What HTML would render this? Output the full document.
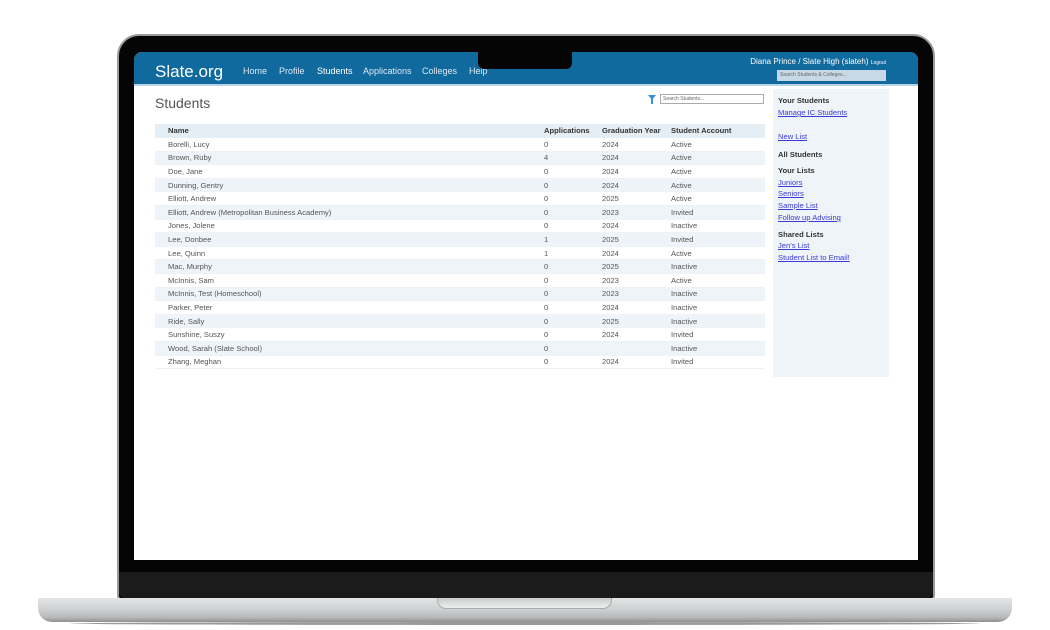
<!DOCTYPE html>
<html><head><style>
*{margin:0;padding:0;box-sizing:border-box}
body{width:1050px;height:630px;background:#fff;position:relative;overflow:hidden;font-family:"Liberation Sans",Arial,sans-serif}
.lid{position:absolute;left:117px;top:34px;width:818px;height:566px;background:#050505;border-radius:22px 22px 4px 4px;border:2px solid #9a9a9a}
.chin{position:absolute;left:119px;top:572px;width:814px;height:26px;background:#1b1b1b;border-radius:0 0 6px 6px}
.screen{position:absolute;left:134px;top:52px;width:784px;height:508px;background:#fff;border-radius:8px 8px 0 0;overflow:hidden}
.hdr{position:absolute;left:0;top:0;width:784px;height:34px;background:#116a9e;border-bottom:2px solid #b9d3e6}
.notch{position:absolute;left:478px;top:52px;width:94px;height:17px;background:#050505;border-radius:0 0 6px 6px}
.logo{position:absolute;left:21px;top:10px;color:#fff;font-size:17px}
.nav{position:absolute;top:14px;color:#dde9f3;font-size:9px}
.user{position:absolute;right:32px;top:5px;color:#fff;font-size:8px}
.user small{font-size:5px}
.gsearch{position:absolute;left:643px;top:18px;width:109px;height:11px;background:#c7d9e6;font-size:5px;color:#666;padding:2px 3px}
h1{position:absolute;left:21px;top:43px;font-size:14px;font-weight:normal;color:#555}
.filter{position:absolute;left:514px;top:43px;width:0;height:0;border-left:4px solid transparent;border-right:4px solid transparent;border-top:5px solid #3a8fd8}
.filter:after{content:"";position:absolute;left:-1px;top:-1px;width:2px;height:5px;background:#3a8fd8}
.ssearch{position:absolute;left:526px;top:42px;width:104px;height:10px;border:1px solid #aaa;font-size:5px;color:#666;padding:1px 2px}
table{position:absolute;left:21px;top:72px;width:610px;border-collapse:collapse;font-size:7.6px;color:#555}
td,th{height:13.6px;padding:0;text-align:left}
th{font-weight:bold;color:#333;background:#e5eef5}
tr:nth-child(odd) td{background:#eef4f9}
tr td{border-bottom:1px solid #eef2f5}
td:first-child,th:first-child{padding-left:13px;width:389px}
td:nth-child(2),th:nth-child(2){width:58px}
td:nth-child(3),th:nth-child(3){width:69px}
.side{position:absolute;left:639px;top:37px;width:116px;height:288px;background:#eef4f8;font-size:7.6px}
.side b,.side a{position:absolute;left:5px;white-space:nowrap}
.side b{color:#333}
.side a{color:#3b3bd6;text-decoration:underline}
.base{position:absolute;left:38px;top:598px;width:974px;height:24px;background:linear-gradient(#e4e5e6,#cfd1d2 45%,#b7b9ba 80%,#8f9091);border-radius:2px 2px 14px 14px}
.cut{position:absolute;left:437px;top:598px;width:175px;height:11px;background:linear-gradient(#c9cbcc,#eef0f0);border-radius:0 0 9px 9px;border:1px solid #aaa;border-top:none}
.shadow{position:absolute;left:70px;top:622px;width:910px;height:3px;background:#555;border-radius:50%;opacity:.6}
</style></head><body>
<div class="lid"></div>
<div class="chin"></div>
<div class="screen">
 <div class="hdr">
  <div class="logo">Slate.org</div>
  <div class="nav" style="left:109px">Home</div>
  <div class="nav" style="left:145px">Profile</div>
  <div class="nav" style="left:183px;color:#fff">Students</div>
  <div class="nav" style="left:229px">Applications</div>
  <div class="nav" style="left:288px">Colleges</div>
  <div class="nav" style="left:335px">Help</div>
  <div class="user">Diana Prince / Slate High (slateh) <small>Logout</small></div>
  <div class="gsearch">Search Students &amp; Colleges...</div>
 </div>
 <h1>Students</h1>
 <div class="filter"></div>
 <div class="ssearch">Search Students...</div>
 <table>
 <tr><th>Name</th><th>Applications</th><th>Graduation Year</th><th>Student Account</th></tr>
 <tr><td>Borelli, Lucy</td><td>0</td><td>2024</td><td>Active</td></tr>
 <tr><td>Brown, Ruby</td><td>4</td><td>2024</td><td>Active</td></tr>
 <tr><td>Doe, Jane</td><td>0</td><td>2024</td><td>Active</td></tr>
 <tr><td>Dunning, Gentry</td><td>0</td><td>2024</td><td>Active</td></tr>
 <tr><td>Elliott, Andrew</td><td>0</td><td>2025</td><td>Active</td></tr>
 <tr><td>Elliott, Andrew (Metropolitan Business Academy)</td><td>0</td><td>2023</td><td>Invited</td></tr>
 <tr><td>Jones, Jolene</td><td>0</td><td>2024</td><td>Inactive</td></tr>
 <tr><td>Lee, Donbee</td><td>1</td><td>2025</td><td>Invited</td></tr>
 <tr><td>Lee, Quinn</td><td>1</td><td>2024</td><td>Active</td></tr>
 <tr><td>Mac, Murphy</td><td>0</td><td>2025</td><td>Inactive</td></tr>
 <tr><td>McInnis, Sam</td><td>0</td><td>2023</td><td>Active</td></tr>
 <tr><td>McInnis, Test (Homeschool)</td><td>0</td><td>2023</td><td>Inactive</td></tr>
 <tr><td>Parker, Peter</td><td>0</td><td>2024</td><td>Inactive</td></tr>
 <tr><td>Ride, Sally</td><td>0</td><td>2025</td><td>Inactive</td></tr>
 <tr><td>Sunshine, Suszy</td><td>0</td><td>2024</td><td>Invited</td></tr>
 <tr><td>Wood, Sarah (Slate School)</td><td>0</td><td></td><td>Inactive</td></tr>
 <tr><td>Zhang, Meghan</td><td>0</td><td>2024</td><td>Invited</td></tr>
 </table>
 <div class="side">
  <b style="top:7px">Your Students</b>
  <a style="top:19px">Manage IC Students</a>
  <a style="top:43px">New List</a>
  <b style="top:61px">All Students</b>
  <b style="top:77px">Your Lists</b>
  <a style="top:89px">Juniors</a>
  <a style="top:100px">Seniors</a>
  <a style="top:112px">Sample List</a>
  <a style="top:124px">Follow up Advising</a>
  <b style="top:141px">Shared Lists</b>
  <a style="top:152px">Jen's List</a>
  <a style="top:164px">Student List to Email!</a>
 </div>
</div>
<div class="notch"></div>
<div class="shadow"></div>
<div class="base"></div>
<div class="cut"></div>
</body></html>
